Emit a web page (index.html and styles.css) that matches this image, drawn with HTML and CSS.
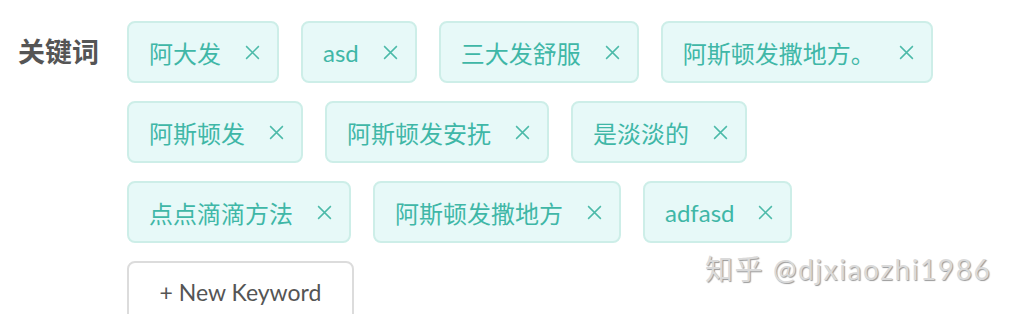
FILE: index.html
```html
<!DOCTYPE html>
<html lang="zh-CN">
<head>
    <meta charset="UTF-8">
    <title>关键词</title>
    <link rel="stylesheet" href="styles.css">
</head>
<body>
    <div class="field">
        <div class="field-label">关键词</div>
        <div class="tag-list">
            <span class="tag">阿大发<svg class="close" viewBox="0 0 16 16"><path d="M2 2L14 14M14 2L2 14"/></svg></span>
            <span class="tag">asd<svg class="close" viewBox="0 0 16 16"><path d="M2 2L14 14M14 2L2 14"/></svg></span>
            <span class="tag">三大发舒服<svg class="close" viewBox="0 0 16 16"><path d="M2 2L14 14M14 2L2 14"/></svg></span>
            <span class="tag">阿斯顿发撒地方。<svg class="close" viewBox="0 0 16 16"><path d="M2 2L14 14M14 2L2 14"/></svg></span>
            <span class="tag">阿斯顿发<svg class="close" viewBox="0 0 16 16"><path d="M2 2L14 14M14 2L2 14"/></svg></span>
            <span class="tag">阿斯顿发安抚<svg class="close" viewBox="0 0 16 16"><path d="M2 2L14 14M14 2L2 14"/></svg></span>
            <span class="tag">是淡淡的<svg class="close" viewBox="0 0 16 16"><path d="M2 2L14 14M14 2L2 14"/></svg></span>
            <span class="tag">点点滴滴方法<svg class="close" viewBox="0 0 16 16"><path d="M2 2L14 14M14 2L2 14"/></svg></span>
            <span class="tag">阿斯顿发撒地方<svg class="close" viewBox="0 0 16 16"><path d="M2 2L14 14M14 2L2 14"/></svg></span>
            <span class="tag">adfasd<svg class="close" viewBox="0 0 16 16"><path d="M2 2L14 14M14 2L2 14"/></svg></span>
            <button class="new-tag">+ New Keyword</button>
        </div>
    </div>
    <div class="watermark">知乎 @djxiaozhi1986</div>
</body>
</html>
```

FILE: styles.css
```css
body {
    margin: 0;
    padding: 21px 0 0 18px;
    background: #ffffff;
    font-family: Lato, "Noto Sans CJK SC", sans-serif;
    overflow: hidden;
}

.field {
    display: flex;
    align-items: flex-start;
}

.field-label {
    width: 109px;
    flex-shrink: 0;
    line-height: 62px;
    font-size: 27px;
    font-weight: bold;
    color: #555;
}

.tag-list {
    display: flex;
    flex-wrap: wrap;
    column-gap: 22px;
    row-gap: 18px;
    width: 830px;
}

.tag {
    display: inline-flex;
    align-items: center;
    box-sizing: border-box;
    height: 62px;
    padding: 0 16px 0 20px;
    background-color: #e7f9f8;
    border: 2px solid #cdeee8;
    border-radius: 8px;
    color: #3fb7a7;
    font-size: 24px;
}

.close {
    width: 17px;
    height: 17px;
    margin-left: 23px;
    fill: none;
    stroke: #4cbaa9;
    stroke-width: 1.4;
}

.new-tag {
    box-sizing: border-box;
    width: 227px;
    height: 62px;
    background: #fff;
    border: 2px solid #dcdcdc;
    border-radius: 8px;
    color: #555;
    font-family: Lato, sans-serif;
    font-size: 23px;
    padding: 0;
}

.watermark {
    position: absolute;
    left: 705px;
    top: 248px;
    font-size: 28px;
    color: #dadada;
    text-shadow: 1px 1px 1px #9a9a9a;
    letter-spacing: 1.6px;
}
```
